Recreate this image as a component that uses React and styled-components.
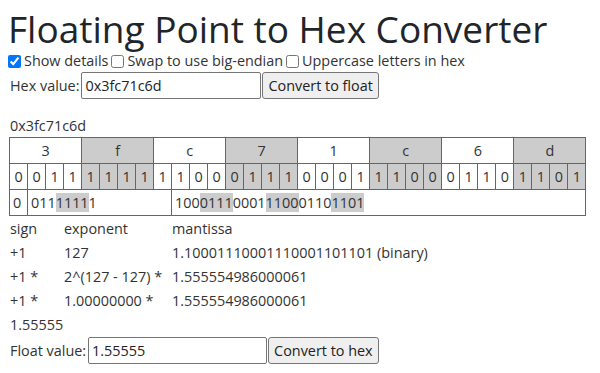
import React, { useState } from "react";
import styled, { createGlobalStyle } from "styled-components";

const GlobalStyle = createGlobalStyle`
  body {
    margin: 8px;
    font-family: "Open Sans", "Noto Sans", sans-serif;
    font-size: 14.4px;
    color: #333;
    background: #fff;
  }
`;

const hex = "3fc71c6d";
const bits = hex
  .split("")
  .map((h) => parseInt(h, 16).toString(2).padStart(4, "0"))
  .join("");

const App = () => {
  const [showDetails, setShowDetails] = useState(true);
  const [hexValue, setHexValue] = useState("0x3fc71c6d");
  const [floatValue, setFloatValue] = useState("1.55555");

  // bits grouped by nibble so we can shade alternating groups
  const shade = (i) => Math.floor(i / 4) % 2 === 1;

  const renderBits = (from, to) => {
    const parts = [];
    let cur = null;
    for (let i = from; i < to; i++) {
      const s = shade(i);
      if (!cur || cur.s !== s) {
        cur = { s, text: "" };
        parts.push(cur);
      }
      cur.text += bits[i];
    }
    return parts.map((p, i) => (
      <Mark key={i} $shaded={p.s}>
        {p.text}
      </Mark>
    ));
  };

  return (
    <>
      <GlobalStyle />
      <Title>Floating Point to Hex Converter</Title>
      <Options>
        <Option>
          <input
            type="checkbox"
            checked={showDetails}
            onChange={(e) => setShowDetails(e.target.checked)}
          />
          <span>Show details</span>
        </Option>
        <Option>
          <input type="checkbox" />
          <span>Swap to use big-endian</span>
        </Option>
        <Option>
          <input type="checkbox" />
          <span>Uppercase letters in hex</span>
        </Option>
      </Options>
      <Row>
        <span>Hex value:</span>
        <Field
          $width={180}
          value={hexValue}
          onChange={(e) => setHexValue(e.target.value)}
        />
        <Button>Convert to float</Button>
      </Row>

      <HexLabel>0x3fc71c6d</HexLabel>
      <Bits>
        <colgroup>
          {bits.split("").map((_, i) => (
            <col key={i} style={{ width: 18 }} />
          ))}
        </colgroup>
        <tbody>
          <tr>
            {hex.split("").map((h, i) => (
              <Cell key={i} colSpan={4} $shaded={i % 2 === 1}>
                {h}
              </Cell>
            ))}
          </tr>
          <tr>
            {bits.split("").map((b, i) => (
              <Cell key={i} $shaded={shade(i)}>
                {b}
              </Cell>
            ))}
          </tr>
          <tr>
            <Cell $left>{bits[0]}</Cell>
            <Cell $left colSpan={8}>
              {renderBits(1, 9)}
            </Cell>
            <Cell $left colSpan={23}>
              {renderBits(9, 32)}
            </Cell>
          </tr>
        </tbody>
      </Bits>

      {showDetails && (
        <Details>
          <span>sign</span>
          <span>exponent</span>
          <span>mantissa</span>
          <span>+1</span>
          <span>127</span>
          <span>1.10001110001110001101101 (binary)</span>
          <span>+1 *</span>
          <span>2^(127 - 127) *</span>
          <span>1.555554986000061</span>
          <span>+1 *</span>
          <span>1.00000000 *</span>
          <span>1.555554986000061</span>
        </Details>
      )}
      <Result>1.55555</Result>
      <Row>
        <span>Float value:</span>
        <Field
          $width={179}
          value={floatValue}
          onChange={(e) => setFloatValue(e.target.value)}
        />
        <Button>Convert to hex</Button>
      </Row>
    </>
  );
};

export default App;

const Title = styled.h1`
  margin: 0;
  font-size: 37px;
  font-weight: 500;
  line-height: 42px;
  color: #212529;
`;

const Options = styled.div`
  display: flex;
  align-items: center;
  gap: 3px;
  height: 22px;
`;

const Option = styled.label`
  display: flex;
  align-items: center;
  gap: 3px;
  line-height: 20px;

  input {
    width: 13px;
    height: 13px;
    margin: 0;
  }
`;

const Row = styled.div`
  display: flex;
  align-items: center;
  height: 27px;
  span {
    margin: 0 2px 0 2px;
  }
`;

const Field = styled.input`
  box-sizing: border-box;
  width: ${(p) => p.$width}px;
  height: 27px;
  padding: 1px 3px;
  border: 1px solid #767676;
  border-radius: 2px;
  font: inherit;
  color: #222;
  outline: none;
`;

const Button = styled.button`
  box-sizing: border-box;
  height: 27px;
  padding: 0 5px;
  margin-left: 1px;
  border: 1px solid #767676;
  border-radius: 3px;
  background: #efefef;
  font: inherit;
  color: #222;
`;

const HexLabel = styled.div`
  margin-top: 16px;
  padding-left: 2px;
  line-height: 22px;
`;

const Bits = styled.table`
  table-layout: fixed;
  border-collapse: collapse;
  width: 577px;
  margin-left: 1px;
  border: 1px solid #333;
`;

const Cell = styled.td`
  height: 25px;
  padding: 0 ${(p) => (p.$left ? "3px" : "0")};
  border: 1px solid #666;
  text-align: ${(p) => (p.$left ? "left" : "center")};
  background: ${(p) => (p.$shaded ? "#ccc" : "#fff")};
  white-space: nowrap;
  overflow: hidden;
`;

const Mark = styled.span`
  background: ${(p) => (p.$shaded ? "#ccc" : "transparent")};
`;

const Details = styled.div`
  display: grid;
  grid-template-columns: 54px 108px auto;
  padding-left: 2px;
  margin-top: 1px;
  line-height: 24px;
`;

const Result = styled.div`
  padding-left: 2px;
  line-height: 24px;
`;
